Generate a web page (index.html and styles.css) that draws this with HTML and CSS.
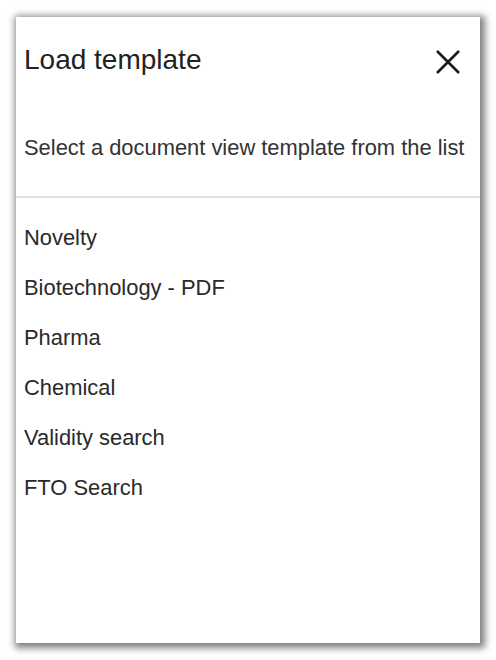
FILE: index.html
```html
<!DOCTYPE html>
<html>
<head>
<meta charset="utf-8">
<link rel="stylesheet" href="styles.css">
</head>
<body>
<div class="panel">
  <div class="header">
    <h1 class="title">Load template</h1>
    <button class="close" aria-label="Close">
      <svg width="26" height="26" viewBox="0 0 26 26"><path d="M2 2 L24 24 M24 2 L2 24" stroke="#1a1a1a" stroke-width="2.6" fill="none"/></svg>
    </button>
  </div>
  <p class="desc">Select a document view template from the list</p>
  <ul class="list">
    <li>Novelty</li>
    <li>Biotechnology - PDF</li>
    <li>Pharma</li>
    <li>Chemical</li>
    <li>Validity search</li>
    <li>FTO Search</li>
  </ul>
</div>
</body>
</html>
```
FILE: styles.css
```css
html, body { margin: 0; padding: 0; background: #fff; }
body { padding: 17px 16px; font-family: "Liberation Sans", Arial, sans-serif; }
.panel {
  width: 464px;
  height: 626px;
  background: #fff;
  box-shadow: 2px 2px 7px 3px rgba(0,0,0,0.5);
  box-sizing: border-box;
  display: flex;
  flex-direction: column;
}
.header {
  display: flex;
  align-items: center;
  justify-content: space-between;
  padding: 27px 19px 0 8px;
}
.title {
  margin: 0;
  font-weight: normal;
  font-size: 28px;
  line-height: 32px;
  color: #222;
}
.close {
  border: 0;
  background: none;
  padding: 0;
  width: 26px;
  height: 26px;
  margin-top: 4px;
  display: flex;
}
.desc {
  margin: 57px 0 0 0;
  padding: 0 0 33px 8px;
  font-size: 21.9px;
  line-height: 30px;
  color: #333;
  border-bottom: 2px solid #e2e2e2;
}
.list {
  list-style: none;
  margin: 0;
  padding: 15px 0 0 8px;
}
.list li {
  font-size: 21.9px;
  line-height: 50px;
  color: #2a2a2a;
}
```
